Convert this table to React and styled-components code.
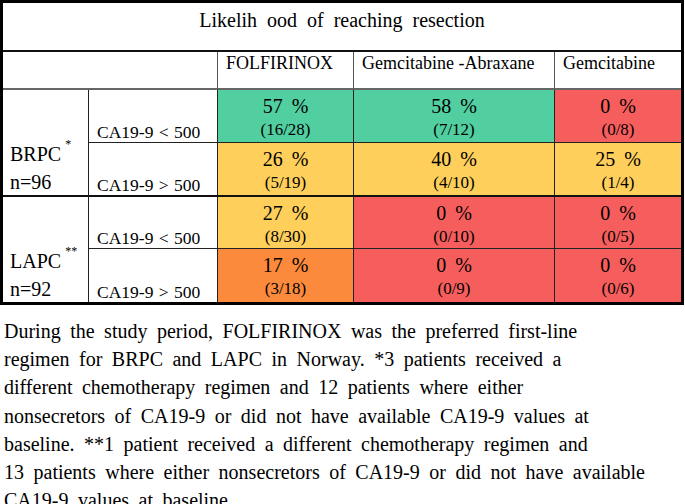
import React from "react";
import styled, { createGlobalStyle, css } from "styled-components";

const serif = css`
  font-family: "Liberation Serif", serif;
`;

const Global = createGlobalStyle`
  html, body { margin: 0; padding: 0; background: #fff; }
  body { font-family: "Liberation Serif", serif; color: #000; }
`;

const Page = styled.div`
  ${serif};
  width: 685px;
  height: 504px;
  overflow: hidden;
`;

const Table = styled.div`
  ${serif};
  width: 684px;
  box-sizing: border-box;
  border: 3px solid #000;
  display: grid;
  grid-template-columns: 86px 129px 136px 201px 126px;
  grid-template-rows: 49px 38px 53px 54px 52px 53px;
`;

const Title = styled.div`
  ${serif};
  grid-column: 1 / 6;
  border-bottom: 2px solid #111;
  text-align: center;
  font-size: 20px;
  line-height: 25px;
  word-spacing: 5px;
  padding-top: 5px;
  box-sizing: border-box;
`;

const Head = styled.div`
  ${serif};
  grid-column: ${(p) => p.$span || "auto"};
  border-right: ${(p) => (p.$last ? "none" : "1.5px solid #555")};
  border-bottom: 2px solid #666;
  font-size: 18px;
  line-height: 20px;
  padding: 1px 0 0 8px;
  box-sizing: border-box;
  white-space: nowrap;
`;

const Group = styled.div`
  ${serif};
  grid-row: ${(p) => p.$row} / span 2;
  grid-column: 1;
  border-right: 1.5px solid #222;
  border-bottom: ${(p) => (p.$last ? "none" : "2px solid #111")};
  display: flex;
  flex-direction: column;
  justify-content: flex-end;
  gap: 3px;
  padding: 0 0 0 7px;
  box-sizing: border-box;
  font-size: 20px;
  line-height: 25px;
`;

const GroupLine = styled.div`
  ${serif};
  white-space: nowrap;
`;

const Sup = styled.sup`
  ${serif};
  font-size: 12px;
  line-height: 12px;
  vertical-align: top;
  position: relative;
  top: -4px;
  margin-left: 4px;
`;

const Sub = styled.div`
  ${serif};
  border-right: 1.5px solid #222;
  border-bottom: ${(p) => p.$border};
  display: flex;
  align-items: flex-end;
  padding: 0 0 0 8px;
  box-sizing: border-box;
  font-size: 17.5px;
  line-height: 20px;
  word-spacing: 1px;
  white-space: nowrap;
`;

const colors = {
  green: "#52cfa1",
  yellow: "#fecf5a",
  red: "#f65e5d",
  orange: "#fb8a3d",
};

const Cell = styled.div`
  ${serif};
  background: ${(p) => colors[p.$c]};
  border-right: ${(p) => (p.$last ? "none" : "1.5px solid #222")};
  border-bottom: ${(p) => p.$border};
  display: flex;
  flex-direction: column;
  align-items: center;
  box-sizing: border-box;
  padding-top: 2px;
`;

const Pct = styled.div`
  ${serif};
  font-size: 20px;
  line-height: 25px;
  word-spacing: 4px;
  padding-top: 2px;
`;

const Frac = styled.div`
  ${serif};
  font-size: 17px;
  line-height: 20px;
  margin-top: 1px;
`;

const Note = styled.p`
  ${serif};
  margin: 12px 0 0 4px;
  font-size: 20px;
  line-height: 28.2px;
  word-spacing: 4.5px;
  white-space: nowrap;
`;

const rows = [
  { label: "CA19-9 < 500", cells: [["57 %", "(16/28)", "green"], ["58 %", "(7/12)", "green"], ["0 %", "(0/8)", "red"]] },
  { label: "CA19-9 > 500", cells: [["26 %", "(5/19)", "yellow"], ["40 %", "(4/10)", "yellow"], ["25 %", "(1/4)", "yellow"]] },
  { label: "CA19-9 < 500", cells: [["27 %", "(8/30)", "yellow"], ["0 %", "(0/10)", "red"], ["0 %", "(0/5)", "red"]] },
  { label: "CA19-9 > 500", cells: [["17 %", "(3/18)", "orange"], ["0 %", "(0/9)", "red"], ["0 %", "(0/6)", "red"]] },
];

const borderFor = (i) => (i === 3 ? "none" : i === 1 ? "2px solid #111" : "1.5px solid #222");

export default function App() {
  return (
    <Page>
      <Global />
      <Table>
        <Title>Likelih ood of reaching resection</Title>
        <Head $span="1 / 3" />
        <Head>FOLFIRINOX</Head>
        <Head>Gemcitabine -Abraxane</Head>
        <Head $last>Gemcitabine</Head>
        <Group $row={3}>
          <GroupLine>
            BRPC<Sup>*</Sup>
          </GroupLine>
          <GroupLine>n=96</GroupLine>
        </Group>
        <Group $row={5} $last>
          <GroupLine>
            LAPC<Sup>**</Sup>
          </GroupLine>
          <GroupLine>n=92</GroupLine>
        </Group>
        {rows.map((r, i) => (
          <React.Fragment key={i}>
            <Sub style={{ gridRow: i + 3, gridColumn: 2 }} $border={borderFor(i)}>
              {r.label}
            </Sub>
            {r.cells.map(([p, f, c], j) => (
              <Cell
                key={j}
                style={{ gridRow: i + 3, gridColumn: j + 3 }}
                $c={c}
                $last={j === 2}
                $border={borderFor(i)}
              >
                <Pct>{p}</Pct>
                <Frac>{f}</Frac>
              </Cell>
            ))}
          </React.Fragment>
        ))}
      </Table>
      <Note>
        During the study period, FOLFIRINOX was the preferred first-line
        <br />
        regimen for BRPC and LAPC in Norway. *3 patients received a
        <br />
        different chemotherapy regimen and 12 patients where either
        <br />
        nonsecretors of CA19-9 or did not have available CA19-9 values at
        <br />
        baseline. **1 patient received a different chemotherapy regimen and
        <br />
        13 patients where either nonsecretors of CA19-9 or did not have available
        <br />
        CA19-9 values at baseline
      </Note>
    </Page>
  );
}
